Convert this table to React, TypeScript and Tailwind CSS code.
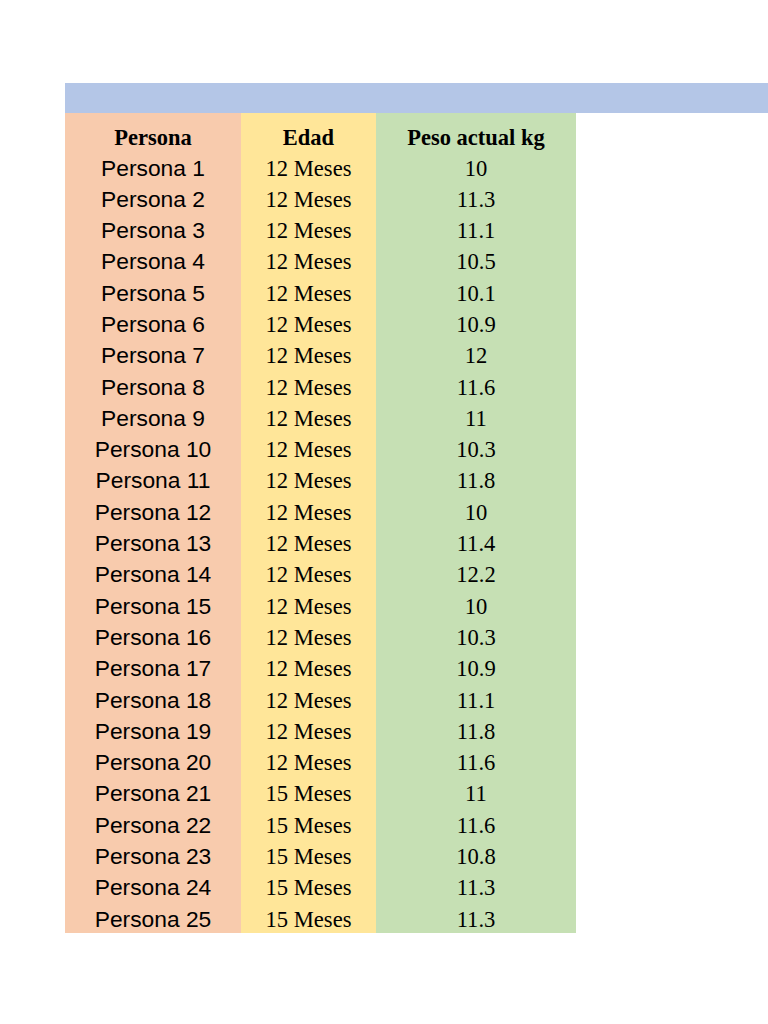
import React from "react";

const ages = [
  "12", "12", "12", "12", "12", "12", "12", "12", "12", "12",
  "12", "12", "12", "12", "12", "12", "12", "12", "12", "12",
  "15", "15", "15", "15", "15",
];
const weights = [
  "10", "11.3", "11.1", "10.5", "10.1", "10.9", "12", "11.6", "11", "10.3",
  "11.8", "10", "11.4", "12.2", "10", "10.3", "10.9", "11.1", "11.8", "11.6",
  "11", "11.6", "10.8", "11.3", "11.3",
];

const serif = "font-['Liberation_Serif','Times_New_Roman',serif]";
const sans = "font-['Liberation_Sans',Arial,sans-serif]";

export default function App() {
  return (
    <div className="min-h-[1024px] w-[768px] bg-white pt-[83px] pl-[65px] text-black">
      <div className="h-[30px] w-[703px] bg-[#B4C6E7]" />
      <div className="grid w-[511px] grid-cols-[176px_135px_200px]">
        <div className={`flex h-[37.5px] items-end justify-center bg-[#F8CBAD] ${serif} text-[22.5px] font-bold leading-[27px]`}>
          Persona
        </div>
        <div className={`flex h-[37.5px] items-end justify-center bg-[#FFE699] ${serif} text-[22.5px] font-bold leading-[27px]`}>
          Edad
        </div>
        <div className={`flex h-[37.5px] items-end justify-center bg-[#C6E0B4] ${serif} text-[22.5px] font-bold leading-[27px]`}>
          Peso actual kg
        </div>
        {weights.map((w, i) => (
          <React.Fragment key={i}>
            <div className={`h-[31.3px] bg-[#F8CBAD] pt-[2px] text-center ${sans} text-[22.8px] leading-[31.3px]`}>
              Persona {i + 1}
            </div>
            <div className={`h-[31.3px] bg-[#FFE699] pt-[2px] text-center ${serif} text-[22.6px] leading-[31.3px]`}>
              {ages[i]} Meses
            </div>
            <div className={`h-[31.3px] bg-[#C6E0B4] pt-[2px] text-center ${serif} text-[22.6px] leading-[31.3px]`}>
              {w}
            </div>
          </React.Fragment>
        ))}
      </div>
    </div>
  );
}
